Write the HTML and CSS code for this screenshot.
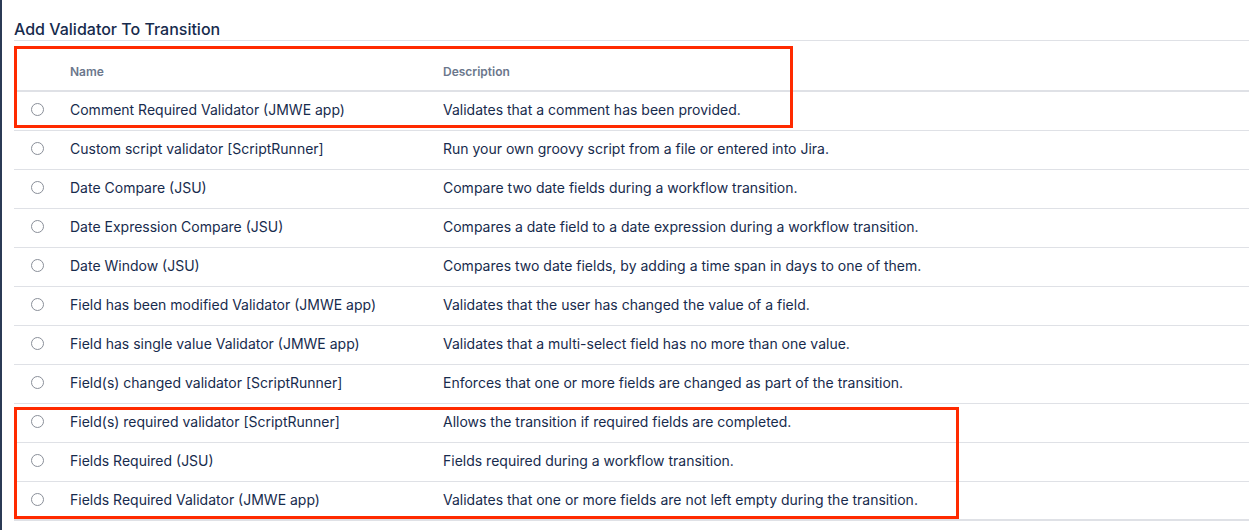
FILE: index.html
```html
<!DOCTYPE html>
<html lang="en">
<head>
    <meta charset="UTF-8">
    <meta name="viewport" content="width=device-width, initial-scale=1.0">
    <title>Add Validator To Transition</title>
    <link rel="stylesheet" href="styles.css">
</head>
<body>
    <div class="page">
        <h2 class="title">Add Validator To Transition</h2>
        <table class="validators">
            <thead>
                <tr>
                    <th class="pick"></th>
                    <th class="name">Name</th>
                    <th>Description</th>
                </tr>
            </thead>
            <tbody>
                <tr>
                    <td class="pick"><span class="radio"></span></td>
                    <td class="name">Comment Required Validator (JMWE app)</td>
                    <td>Validates that a comment has been provided.</td>
                </tr>
                <tr>
                    <td class="pick"><span class="radio"></span></td>
                    <td class="name">Custom script validator [ScriptRunner]</td>
                    <td>Run your own groovy script from a file or entered into Jira.</td>
                </tr>
                <tr>
                    <td class="pick"><span class="radio"></span></td>
                    <td class="name">Date Compare (JSU)</td>
                    <td>Compare two date fields during a workflow transition.</td>
                </tr>
                <tr>
                    <td class="pick"><span class="radio"></span></td>
                    <td class="name">Date Expression Compare (JSU)</td>
                    <td>Compares a date field to a date expression during a workflow transition.</td>
                </tr>
                <tr>
                    <td class="pick"><span class="radio"></span></td>
                    <td class="name">Date Window (JSU)</td>
                    <td>Compares two date fields, by adding a time span in days to one of them.</td>
                </tr>
                <tr>
                    <td class="pick"><span class="radio"></span></td>
                    <td class="name">Field has been modified Validator (JMWE app)</td>
                    <td>Validates that the user has changed the value of a field.</td>
                </tr>
                <tr>
                    <td class="pick"><span class="radio"></span></td>
                    <td class="name">Field has single value Validator (JMWE app)</td>
                    <td>Validates that a multi-select field has no more than one value.</td>
                </tr>
                <tr>
                    <td class="pick"><span class="radio"></span></td>
                    <td class="name">Field(s) changed validator [ScriptRunner]</td>
                    <td>Enforces that one or more fields are changed as part of the transition.</td>
                </tr>
                <tr>
                    <td class="pick"><span class="radio"></span></td>
                    <td class="name">Field(s) required validator [ScriptRunner]</td>
                    <td>Allows the transition if required fields are completed.</td>
                </tr>
                <tr>
                    <td class="pick"><span class="radio"></span></td>
                    <td class="name">Fields Required (JSU)</td>
                    <td>Fields required during a workflow transition.</td>
                </tr>
                <tr>
                    <td class="pick"><span class="radio"></span></td>
                    <td class="name">Fields Required Validator (JMWE app)</td>
                    <td>Validates that one or more fields are not left empty during the transition.</td>
                </tr>
            </tbody>
        </table>

        <!-- red highlight boxes drawn over the table -->
        <div class="mark mark-top"></div>
        <div class="mark mark-bottom"></div>
    </div>
</body>
</html>
```

FILE: styles.css
```css
*{
    box-sizing: border-box;
}
body{
    margin: 0;
    background: white;
    font-family: "Inter", "Roboto", "Liberation Sans", sans-serif;
    color: #172b4d;
}
.page{
    position: relative;
    min-height: 530px;
    padding-left: 12px;
    border-left: 2px solid #2b3a55;
}
.title{
    margin: 0;
    padding-top: 18px;
    height: 41px;
    font-size: 16px;
    font-weight: 500;
    line-height: 22px;
    color: #172b4d;
    border-bottom: 1px solid #dfe1e6;
}
.validators{
    width: 100%;
    border-collapse: collapse;
    font-size: 14px;
}
.validators th{
    height: 50px;
    padding: 12px 0 0 0;
    text-align: left;
    font-size: 12px;
    font-weight: 600;
    color: #6b778c;
    border-bottom: 2px solid #dfe1e6;
}
.validators td{
    height: 39px;
    padding: 0 0 2px 0;
    border-bottom: 1px solid #dfe1e6;
    vertical-align: middle;
}
.validators tbody tr:last-child td{
    border-bottom: 2px solid #dfe1e6;
}
.pick{
    width: 56px;
    padding-left: 17px !important;
}
.name{
    width: 373px;
}
.radio{
    display: block;
    width: 13px;
    height: 13px;
    border: 1px solid #8a8f99;
    border-radius: 50%;
    background: white;
}
.mark{
    position: absolute;
    border: 3px solid #ff2a00;
}
.mark-top{
    left: 12px;
    top: 46px;
    width: 779px;
    height: 82px;
}
.mark-bottom{
    left: 12px;
    top: 407px;
    width: 945px;
    height: 112px;
}
```
